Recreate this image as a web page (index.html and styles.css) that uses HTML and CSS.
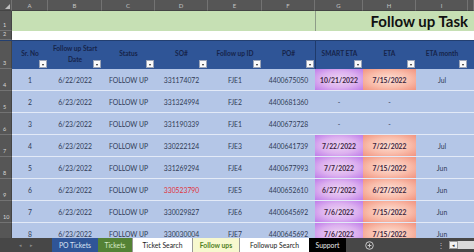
FILE: index.html
```html
<!DOCTYPE html>
<html lang="en">
  <head>
    <meta charset="UTF-8" />
    <meta name="viewport" content="width=device-width, initial-scale=1.0" />
    <title>Follow up Task</title>
    <link rel="stylesheet" href="styles.css">
  </head>
  <body>
    <main class="sheet">
      <div class="row col-head">
        <div class="corner"></div>
        <div>A</div><div>B</div><div>C</div><div>D</div><div>E</div>
        <div>F</div><div>G</div><div>H</div><div>I</div><div></div>
      </div>

      <div class="row title-row">
        <div class="rh">1</div>
        <div class="band-left"></div>
        <div class="band-right"><h1 class="title">Follow up Task</h1></div>
        <div class="band-rest"></div>
      </div>

      <div class="row gap-row">
        <div class="rh">2</div>
        <div class="blank"></div>
      </div>

      <div class="row head-row">
        <div class="rh">3</div>
        <div class="th">Sr. No<span class="filter"></span></div>
        <div class="th">Follow up Start<br />Date<span class="filter"></span></div>
        <div class="th">Status<span class="filter"></span></div>
        <div class="th">SO#<span class="filter"></span></div>
        <div class="th">Follow up ID<span class="filter"></span></div>
        <div class="th">PO#<span class="filter"></span></div>
        <div class="th th-g">SMART ETA<span class="filter"></span></div>
        <div class="th">ETA<span class="filter"></span></div>
        <div class="th">ETA month<span class="filter"></span></div>
        <div class="th"></div>
      </div>

      <div class="row data-row">
        <div class="rh">4</div>
        <div>1</div><div>6/22/2022</div><div>FOLLOW UP</div><div>331174072</div>
        <div>FJE1</div><div>4400675050</div>
        <div class="smart">10/21/2022</div><div class="eta">7/15/2022</div>
        <div>Jul</div><div></div>
      </div>

      <div class="row data-row">
        <div class="rh">5</div>
        <div>2</div><div>6/23/2022</div><div>FOLLOW UP</div><div>331324994</div>
        <div>FJE2</div><div>4400681360</div>
        <div>-</div><div>-</div>
        <div></div><div></div>
      </div>

      <div class="row data-row">
        <div class="rh">6</div>
        <div>3</div><div>6/23/2022</div><div>FOLLOW UP</div><div>331190339</div>
        <div>FJE1</div><div>4400673728</div>
        <div>-</div><div>-</div>
        <div></div><div></div>
      </div>

      <div class="row data-row">
        <div class="rh">7</div>
        <div>4</div><div>6/23/2022</div><div>FOLLOW UP</div><div>330222124</div>
        <div>FJE3</div><div>4400641739</div>
        <div class="smart">7/22/2022</div><div class="eta">7/22/2022</div>
        <div>Jul</div><div></div>
      </div>

      <div class="row data-row">
        <div class="rh">8</div>
        <div>5</div><div>6/23/2022</div><div>FOLLOW UP</div><div>331269294</div>
        <div>FJE4</div><div>4400677993</div>
        <div class="smart">7/7/2022</div><div class="eta">7/15/2022</div>
        <div>Jun</div><div></div>
      </div>

      <div class="row data-row">
        <div class="rh">9</div>
        <div>6</div><div>6/23/2022</div><div>FOLLOW UP</div><div class="red">330523790</div>
        <div>FJE5</div><div>4400652610</div>
        <div class="smart">6/27/2022</div><div class="eta">6/27/2022</div>
        <div>Jun</div><div></div>
      </div>

      <div class="row data-row">
        <div class="rh">10</div>
        <div>7</div><div>6/23/2022</div><div>FOLLOW UP</div><div>330029827</div>
        <div>FJE6</div><div>4400645692</div>
        <div class="smart">7/6/2022</div><div class="eta">7/15/2022</div>
        <div>Jun</div><div></div>
      </div>

      <div class="row data-row">
        <div class="rh"></div>
        <div>8</div><div>6/23/2022</div><div>FOLLOW UP</div><div>330030004</div>
        <div>FJE7</div><div>4400645692</div>
        <div class="smart">7/6/2022</div><div class="eta">7/15/2022</div>
        <div>Jun</div><div></div>
      </div>
    </main>

    <nav class="tab-bar">
      <div class="nav-arrows"><span>&#9666;</span><span>&#9656;</span></div>
      <div class="tab tab-po">PO Tickets</div>
      <div class="tab tab-tickets">Tickets</div>
      <div class="tab tab-white">Ticket Search</div>
      <div class="tab tab-active">Follow ups</div>
      <div class="tab tab-white">Followup Search</div>
      <div class="tab tab-support">Support</div>
      <div class="add-sheet">
        <svg width="9" height="9" viewBox="0 0 9 9">
          <circle cx="4.5" cy="4.5" r="3.8" fill="none" stroke="#c8c8c8" stroke-width="1" />
          <path d="M4.5 2.6v3.8M2.6 4.5h3.8" stroke="#c8c8c8" stroke-width="1" />
        </svg>
      </div>
      <div class="dots">&#8942;</div>
      <div class="hscroll"><span class="hscroll-btn">&#9666;</span></div>
    </nav>
  </body>
</html>
```

FILE: styles.css
```css
:root {
  --cols: 12px 36px 54px 53px 53px 54px 53px 48px 53px 52px 1fr;
  --head-gray: #565656;
  --head-line: #737373;
  --green: #c6e0b4;
  --blue-dark: #2f5597;
  --blue-light: #b4c6e7;
  --row-line: #e3eaf7;
  --ink: #303b56;
}

* {
  margin: 0;
  padding: 0;
  box-sizing: border-box;
}

body {
  width: 474px;
  height: 252px;
  overflow: hidden;
  background: #fff;
  font-family: Lato, "Liberation Sans", sans-serif;
  display: flex;
  flex-direction: column;
}

.sheet {
  height: 238px;
  overflow: hidden;
}

.row {
  display: grid;
  grid-template-columns: var(--cols);
}

.row > div {
  display: flex;
  align-items: center;
  justify-content: center;
  white-space: nowrap;
  overflow: hidden;
}

/* column letters */
.col-head {
  height: 11px;
  background: var(--head-gray);
  color: #c4c4c4;
  font-size: 6px;
}

.col-head > div {
  border-right: 1px solid var(--head-line);
  border-bottom: 1px solid #444;
}

.corner {
  position: relative;
}

.corner::after {
  content: "";
  position: absolute;
  right: 1px;
  bottom: 1px;
  border-left: 5px solid transparent;
  border-bottom: 5px solid #bdbdbd;
}

/* row numbers */
.row > .rh {
  background: var(--head-gray);
  color: #d6d6d6;
  font-size: 5.5px;
  align-items: flex-end;
  justify-content: flex-start;
  padding: 0 0 2px 3px;
  border-bottom: 1px solid var(--head-line);
  border-right: 1px solid #444;
}

.title-row {
  height: 20px;
  background: var(--green);
}

.band-left {
  grid-column: 2 / 8;
}

.band-right {
  grid-column: 8 / 11;
  border-left: 1px solid #8e9c88;
}

.row > .band-right {
  justify-content: flex-end;
  padding-right: 0;
}

.title {
  font-size: 15px;
  font-weight: 700;
  color: #111;
  line-height: 1;
  margin-top: 1px;
}

.gap-row {
  height: 9px;
}

.blank {
  grid-column: 2 / -1;
}

.head-row {
  height: 29px;
  background: var(--blue-dark);
  border-top: 1px solid #233f70;
}

.row > .th {
  position: relative;
  color: #16244a;
  font-size: 6.6px;
  font-weight: 700;
  text-align: center;
  line-height: 1.7;
  padding-bottom: 2px;
}

.th-g {
  border-left: 1px solid #1f3a6a;
}

.filter {
  position: absolute;
  right: 1px;
  bottom: 1px;
  width: 8px;
  height: 8px;
  background: #fafafa;
  border: 1px solid #9aa4b8;
}

.filter::after {
  content: "";
  position: absolute;
  left: 2px;
  top: 3px;
  border-left: 1.5px solid transparent;
  border-right: 1.5px solid transparent;
  border-top: 2px solid #222;
}

.head-row .th:last-child .filter {
  display: none;
}

.data-row {
  height: 22px;
  background: var(--blue-light);
  color: var(--ink);
  font-size: 6.8px;
}

.data-row > div {
  border-bottom: 1px solid var(--row-line);
}

.data-row > .rh {
  border-bottom-color: var(--head-line);
}

.red {
  color: #e0323c;
}

.row > .smart,
.row > .eta {
  font-weight: 700;
  color: #3b1f3e;
}

.smart {
  background: radial-gradient(ellipse at center, #edd3f4 0%, #dcb0ef 55%, #bf7ce9 100%);
}

.eta {
  background: radial-gradient(ellipse at center, #fde0d4 0%, #f9bcaa 55%, #f1937f 100%);
}

/* sheet tabs */
.tab-bar {
  height: 14px;
  background: #474747;
  display: flex;
  align-items: stretch;
  font-size: 6.8px;
}

.nav-arrows {
  width: 52px;
  display: flex;
  align-items: center;
  justify-content: center;
  gap: 8px;
  color: #8a8a8a;
  font-size: 5px;
}

.tab {
  display: flex;
  align-items: center;
  justify-content: center;
  white-space: nowrap;
}

.tab-po {
  width: 46px;
  background: #2f5597;
  color: #dce4f3;
}

.tab-tickets {
  width: 34px;
  background: #548235;
  color: #d6ebc6;
}

.tab-white {
  background: #fff;
  color: #222;
  border-left: 1px solid #9a9a9a;
}

.tab-white:nth-of-type(4) {
  width: 60px;
}

.tab-active {
  width: 47px;
  background: #f7f8cf;
  color: #4f7f23;
  font-weight: 700;
  border-left: 1px solid #9a9a9a;
}

.tab-active + .tab-white {
  width: 70px;
}

.tab-support {
  width: 37px;
  background: #000;
  color: #e8e8e8;
}

.add-sheet {
  width: 46px;
  display: flex;
  align-items: center;
  justify-content: center;
}

.dots {
  width: 57px;
  display: flex;
  align-items: center;
  justify-content: flex-end;
  padding-right: 4px;
  color: #bdbdbd;
  font-size: 8px;
}

.hscroll {
  flex: 1;
  display: flex;
  align-items: center;
  background: #d9d9d9;
  margin: 3px 0;
}

.hscroll-btn {
  width: 9px;
  height: 100%;
  background: #f2f2f2;
  border: 1px solid #9a9a9a;
  font-size: 5px;
  color: #333;
  display: flex;
  align-items: center;
  justify-content: center;
}
```
